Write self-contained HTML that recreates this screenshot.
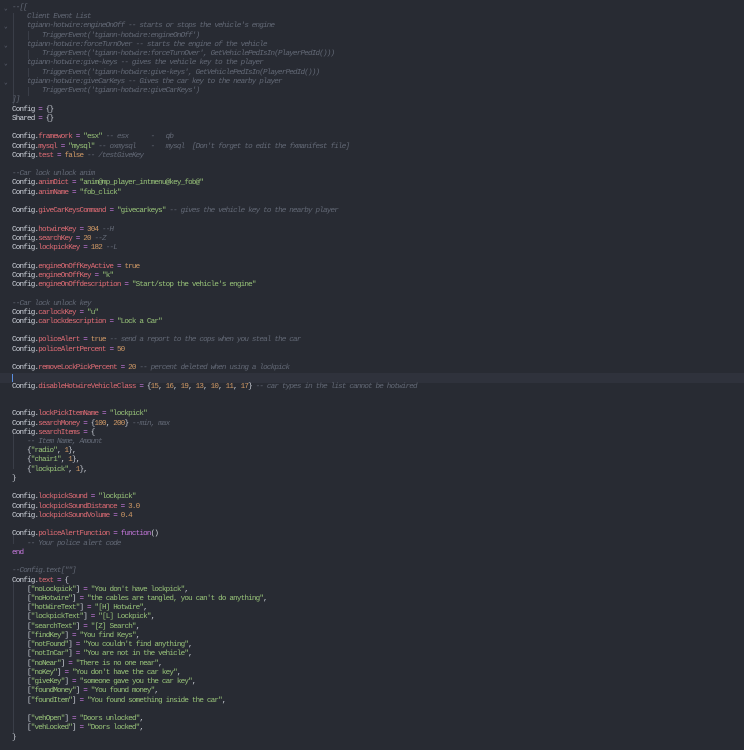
<!DOCTYPE html>
<html><head><meta charset="utf-8"><style>
html,body{margin:0;padding:0;background:#282b33;width:744px;height:750px;overflow:hidden}
#c{position:absolute;left:0;top:4px;width:744px;font-family:"Liberation Mono",monospace;font-size:7.6px;letter-spacing:-0.81px;line-height:9.24px;color:#cdd1d9}
.l{position:relative;height:9.24px;padding-left:12px;white-space:pre}
.hl{background:#2f323c}
.f{position:absolute;left:4px;top:0;color:#6b7080;font-size:6px;letter-spacing:0}
.c{color:#636976;font-style:italic}
.p{color:#e06c75}
.s{color:#98c379}
.n{color:#d19a66}
.o{color:#c678dd}
.k{color:#c678dd}
.g{position:absolute;width:1px;background:#3a3e48}
.cur{position:absolute;left:12px;top:1px;width:1px;height:8px;background:#5a8ee0}
</style></head><body>
<div class="g" style="left:13px;top:13px;height:92px"></div>
<div class="g" style="left:28px;top:31px;height:9px"></div>
<div class="g" style="left:28px;top:50px;height:9px"></div>
<div class="g" style="left:28px;top:68px;height:9px"></div>
<div class="g" style="left:28px;top:87px;height:9px"></div>
<div class="g" style="left:13px;top:433px;height:36px"></div>
<div class="g" style="left:13px;top:535px;height:9px"></div>
<div class="g" style="left:13px;top:581px;height:152px"></div>
<div id="c">
<div class="l"><span class="f">⌄</span><span class="c">--[[</span></div>
<div class="l"><span class="c">    Client Event List</span></div>
<div class="l"><span class="f">⌄</span><span class="c">    tgiann-hotwire:engineOnOff -- starts or stops the vehicle's engine</span></div>
<div class="l"><span class="c">        TriggerEvent('tgiann-hotwire:engineOnOff')</span></div>
<div class="l"><span class="f">⌄</span><span class="c">    tgiann-hotwire:forceTurnOver -- starts the engine of the vehicle</span></div>
<div class="l"><span class="c">        TriggerEvent('tgiann-hotwire:forceTurnOver', GetVehiclePedIsIn(PlayerPedId()))</span></div>
<div class="l"><span class="f">⌄</span><span class="c">    tgiann-hotwire:give-keys -- gives the vehicle key to the player</span></div>
<div class="l"><span class="c">        TriggerEvent('tgiann-hotwire:give-keys', GetVehiclePedIsIn(PlayerPedId()))</span></div>
<div class="l"><span class="f">⌄</span><span class="c">    tgiann-hotwire:giveCarKeys -- Gives the car key to the nearby player</span></div>
<div class="l"><span class="c">        TriggerEvent('tgiann-hotwire:giveCarKeys')</span></div>
<div class="l"><span class="c">]]</span></div>
<div class="l">Config <span class="o">=</span> {}</div>
<div class="l">Shared <span class="o">=</span> {}</div>
<div class="l"> </div>
<div class="l">Config.<span class="p">framework</span> <span class="o">=</span> <span class="s">"esx"</span> <span class="c">-- esx      -   qb</span></div>
<div class="l">Config.<span class="p">mysql</span> <span class="o">=</span> <span class="s">"mysql"</span> <span class="c">-- oxmysql    -   mysql  [Don't forget to edit the fxmanifest file]</span></div>
<div class="l">Config.<span class="p">test</span> <span class="o">=</span> <span class="n">false</span> <span class="c">-- /testGiveKey</span></div>
<div class="l"> </div>
<div class="l"><span class="c">--Car lock unlock anim</span></div>
<div class="l">Config.<span class="p">animDict</span> <span class="o">=</span> <span class="s">"anim@mp_player_intmenu@key_fob@"</span></div>
<div class="l">Config.<span class="p">animName</span> <span class="o">=</span> <span class="s">"fob_click"</span></div>
<div class="l"> </div>
<div class="l">Config.<span class="p">giveCarKeysCommand</span> <span class="o">=</span> <span class="s">"givecarkeys"</span> <span class="c">-- gives the vehicle key to the nearby player</span></div>
<div class="l"> </div>
<div class="l">Config.<span class="p">hotwireKey</span> <span class="o">=</span> <span class="n">304</span> <span class="c">--H</span></div>
<div class="l">Config.<span class="p">searchKey</span> <span class="o">=</span> <span class="n">20</span> <span class="c">--Z</span></div>
<div class="l">Config.<span class="p">lockpickKey</span> <span class="o">=</span> <span class="n">182</span> <span class="c">--L</span></div>
<div class="l"> </div>
<div class="l">Config.<span class="p">engineOnOffKeyActive</span> <span class="o">=</span> <span class="n">true</span></div>
<div class="l">Config.<span class="p">engineOnOffKey</span> <span class="o">=</span> <span class="s">"k"</span></div>
<div class="l">Config.<span class="p">engineOnOffdescription</span> <span class="o">=</span> <span class="s">"Start/stop the vehicle's engine"</span></div>
<div class="l"> </div>
<div class="l"><span class="c">--Car lock unlock key</span></div>
<div class="l">Config.<span class="p">carlockKey</span> <span class="o">=</span> <span class="s">"u"</span></div>
<div class="l">Config.<span class="p">carlockdescription</span> <span class="o">=</span> <span class="s">"Lock a Car"</span></div>
<div class="l"> </div>
<div class="l">Config.<span class="p">policeAlert</span> <span class="o">=</span> <span class="n">true</span> <span class="c">-- send a report to the cops when you steal the car</span></div>
<div class="l">Config.<span class="p">policeAlertPercent</span> <span class="o">=</span> <span class="n">50</span></div>
<div class="l"> </div>
<div class="l">Config.<span class="p">removeLockPickPercent</span> <span class="o">=</span> <span class="n">20</span> <span class="c">-- percent deleted when using a lockpick</span></div>
<div class="l hl"><span class="cur"></span> </div>
<div class="l">Config.<span class="p">disableHotwireVehicleClass</span> <span class="o">=</span> {<span class="n">15</span>, <span class="n">16</span>, <span class="n">19</span>, <span class="n">13</span>, <span class="n">10</span>, <span class="n">11</span>, <span class="n">17</span>} <span class="c">-- car types in the list cannot be hotwired</span></div>
<div class="l"> </div>
<div class="l"> </div>
<div class="l">Config.<span class="p">lockPickItemName</span> <span class="o">=</span> <span class="s">"lockpick"</span></div>
<div class="l">Config.<span class="p">searchMoney</span> <span class="o">=</span> {<span class="n">100</span>, <span class="n">200</span>} <span class="c">--min, max</span></div>
<div class="l">Config.<span class="p">searchItems</span> <span class="o">=</span> {</div>
<div class="l"><span class="c">    -- Item Name, Amount</span></div>
<div class="l">    {<span class="s">"radio"</span>, <span class="n">1</span>},</div>
<div class="l">    {<span class="s">"chair1"</span>, <span class="n">1</span>},</div>
<div class="l">    {<span class="s">"lockpick"</span>, <span class="n">1</span>},</div>
<div class="l">}</div>
<div class="l"> </div>
<div class="l">Config.<span class="p">lockpickSound</span> <span class="o">=</span> <span class="s">"lockpick"</span></div>
<div class="l">Config.<span class="p">lockpickSoundDistance</span> <span class="o">=</span> <span class="n">3.0</span></div>
<div class="l">Config.<span class="p">lockpickSoundVolume</span> <span class="o">=</span> <span class="n">0.4</span></div>
<div class="l"> </div>
<div class="l">Config.<span class="p">policeAlertFunction</span> <span class="o">=</span> <span class="k">function</span>()</div>
<div class="l"><span class="c">    -- Your police alert code</span></div>
<div class="l"><span class="k">end</span></div>
<div class="l"> </div>
<div class="l"><span class="c">--Config.text[""]</span></div>
<div class="l">Config.<span class="p">text</span> <span class="o">=</span> {</div>
<div class="l">    [<span class="s">"noLockpick"</span>] <span class="o">=</span> <span class="s">"You don't have lockpick"</span>,</div>
<div class="l">    [<span class="s">"noHotwire"</span>] <span class="o">=</span> <span class="s">"the cables are tangled, you can't do anything"</span>,</div>
<div class="l">    [<span class="s">"hotWireText"</span>] <span class="o">=</span> <span class="s">"[H] Hotwire"</span>,</div>
<div class="l">    [<span class="s">"lockpickText"</span>] <span class="o">=</span> <span class="s">"[L] Lockpick"</span>,</div>
<div class="l">    [<span class="s">"searchText"</span>] <span class="o">=</span> <span class="s">"[Z] Search"</span>,</div>
<div class="l">    [<span class="s">"findKey"</span>] <span class="o">=</span> <span class="s">"You find Keys"</span>,</div>
<div class="l">    [<span class="s">"notFound"</span>] <span class="o">=</span> <span class="s">"You couldn't find anything"</span>,</div>
<div class="l">    [<span class="s">"notInCar"</span>] <span class="o">=</span> <span class="s">"You are not in the vehicle"</span>,</div>
<div class="l">    [<span class="s">"noNear"</span>] <span class="o">=</span> <span class="s">"There is no one near"</span>,</div>
<div class="l">    [<span class="s">"noKey"</span>] <span class="o">=</span> <span class="s">"You don't have the car key"</span>,</div>
<div class="l">    [<span class="s">"giveKey"</span>] <span class="o">=</span> <span class="s">"someone gave you the car key"</span>,</div>
<div class="l">    [<span class="s">"foundMoney"</span>] <span class="o">=</span> <span class="s">"You found money"</span>,</div>
<div class="l">    [<span class="s">"foundItem"</span>] <span class="o">=</span> <span class="s">"You found something inside the car"</span>,</div>
<div class="l"> </div>
<div class="l">    [<span class="s">"vehOpen"</span>] <span class="o">=</span> <span class="s">"Doors unlocked"</span>,</div>
<div class="l">    [<span class="s">"vehLocked"</span>] <span class="o">=</span> <span class="s">"Doors locked"</span>,</div>
<div class="l">}</div>
</div>
</body></html>
